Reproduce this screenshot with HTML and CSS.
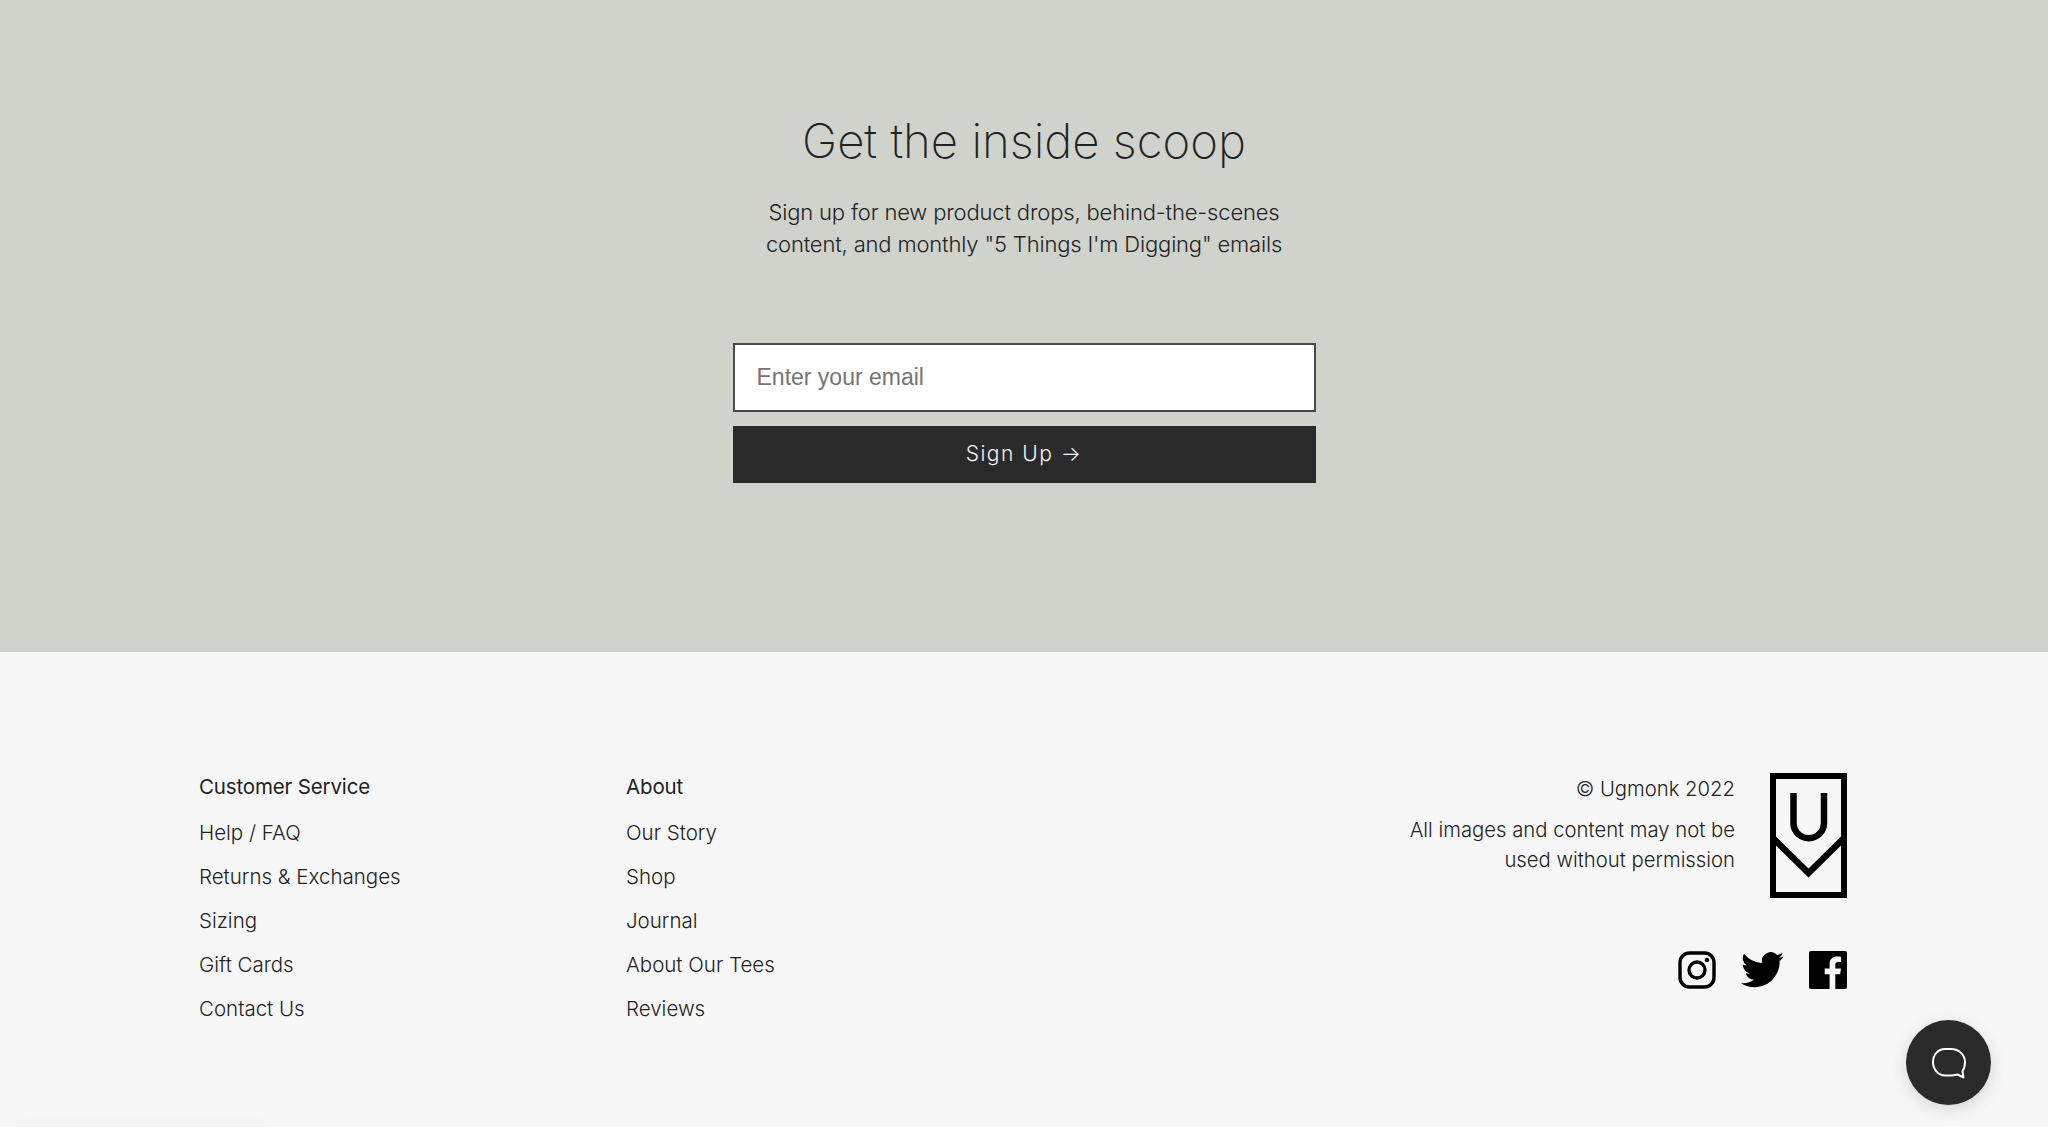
FILE: index.html
```html
<!DOCTYPE html>
<html lang="en">
<head>
<meta charset="utf-8">
<title>Ugmonk</title>
<link rel="stylesheet" href="styles.css">
</head>
<body>
<section class="signup">
  <h2 class="signup-title">Get the inside scoop</h2>
  <p class="signup-text">Sign up for new product drops, behind-the-scenes<br>content, and monthly "5 Things I'm Digging" emails</p>
  <form class="signup-form">
    <input class="signup-input" type="email" placeholder="Enter your email">
    <button class="signup-button" type="button">Sign Up →</button>
  </form>
</section>
<footer class="footer">
  <nav class="footer-col footer-col-service">
    <h3 class="footer-heading">Customer Service</h3>
    <a class="footer-link" href="#">Help / FAQ</a>
    <a class="footer-link" href="#">Returns &amp; Exchanges</a>
    <a class="footer-link" href="#">Sizing</a>
    <a class="footer-link" href="#">Gift Cards</a>
    <a class="footer-link" href="#">Contact Us</a>
  </nav>
  <nav class="footer-col footer-col-about">
    <h3 class="footer-heading">About</h3>
    <a class="footer-link" href="#">Our Story</a>
    <a class="footer-link" href="#">Shop</a>
    <a class="footer-link" href="#">Journal</a>
    <a class="footer-link" href="#">About Our Tees</a>
    <a class="footer-link" href="#">Reviews</a>
  </nav>
  <div class="footer-right">
    <div class="brand">
      <div class="legal">
        <p class="legal-copy">© Ugmonk 2022</p>
        <p class="legal-note">All images and content may not be<br>used without permission</p>
      </div>
      <svg class="logo" viewBox="0 0 77 125" aria-label="Ugmonk logo">
        <rect x="3" y="3" width="71" height="119" fill="none" stroke="#000" stroke-width="6"/>
        <path d="M23.500 20V50a15.250 15.250 0 0 0 30.500 0V20" fill="none" stroke="#000" stroke-width="6.500"/>
        <path d="M4 66L38.500 100L73 66" fill="none" stroke="#000" stroke-width="6.500"/>
      </svg>
    </div>
    <div class="social">
      <svg class="icon-instagram" viewBox="0 0 38 38" aria-label="Instagram">
        <rect x="2" y="2" width="34" height="34" rx="9.500" fill="none" stroke="#000" stroke-width="3.400"/>
        <circle cx="19" cy="19" r="8" fill="none" stroke="#000" stroke-width="3.400"/>
        <circle cx="29" cy="9" r="2.300" fill="#000"/>
      </svg>
      <svg class="icon-twitter" viewBox="0 0 24 20" aria-label="Twitter">
        <path d="M24 2.370a9.800 9.800 0 0 1-2.830.78A4.940 4.940 0 0 0 23.340.42a9.900 9.900 0 0 1-3.130 1.190A4.930 4.930 0 0 0 11.810 6.100 14 14 0 0 1 1.670.96a4.930 4.930 0 0 0 1.520 6.570A4.900 4.900 0 0 1 .96 6.920v.06a4.930 4.930 0 0 0 3.950 4.830 4.950 4.950 0 0 1-2.220.08 4.930 4.930 0 0 0 4.600 3.420A9.880 9.880 0 0 1 0 17.350 13.940 13.940 0 0 0 7.550 19.560c9.060 0 14.010-7.500 14.010-14.010 0-.21 0-.43-.02-.64A10 10 0 0 0 24 2.370z" fill="#000"/>
      </svg>
      <svg class="icon-facebook" viewBox="0 0 38 38" aria-label="Facebook">
        <path d="M2 0H36a2 2 0 0 1 2 2V36a2 2 0 0 1-2 2H26.300V23.300H31.200L31.900 17.500H26.300V13.800C26.300 12.100 26.800 11 29.200 11H32.100V5.800C31.600 5.700 29.900 5.600 27.900 5.600 23.600 5.600 20.600 8.200 20.600 13.100V17.500H15.700V23.300H20.600V38H2A2 2 0 0 1 0 36V2A2 2 0 0 1 2 0Z" fill="#000"/>
      </svg>
    </div>
  </div>
</footer>
<button class="chat" type="button" aria-label="Open chat">
  <svg class="chat-icon" viewBox="0 0 36 32">
    <path d="M14 2H20C28 2 34 8 34 15C34 19 33 22 31.500 24L32.500 30.500L26.500 27.500C24.500 28 22 28.500 20 28.500H14C7 28.500 2 22 2 15C2 8 7 2 14 2Z" fill="none" stroke="#fff" stroke-width="2" stroke-linejoin="round"/>
  </svg>
</button>
<div class="ghost-widget"></div>
</body>
</html>
```
FILE: styles.css
```css
* { box-sizing: border-box; }
html, body { margin: 0; padding: 0; height: 1127px; overflow: hidden; }
body {
  position: relative;
  font-family: Inter, "Liberation Sans", sans-serif;
  background: #f7f7f7;
  color: #222;
}
.signup {
  height: 652px;
  background: #d0d3cc;
  padding-top: 111px;
  display: flex;
  flex-direction: column;
  align-items: center;
  text-align: center;
}
.signup-title {
  margin: 0;
  font-size: 47.300px;
  line-height: 60px;
  font-weight: 250;
  color: #222;
}
.signup-text {
  margin: 25px 0 0;
  font-size: 22px;
  line-height: 32px;
  font-weight: 300;
  letter-spacing: -0.170px;
}
.signup-form {
  margin-top: 83px;
  width: 583px;
  display: flex;
  flex-direction: column;
  gap: 14px;
}
.signup-input {
  height: 69px;
  border: 2px solid #4a4a4a;
  background: #fff;
  padding: 0 22px;
  font-family: "Liberation Sans", Arial, sans-serif;
  font-size: 23px;
  outline: none;
  border-radius: 0;
}
.signup-input::placeholder { color: #757575; opacity: 1; }
.signup-button {
  height: 57px;
  border: 0;
  padding: 0 0 2px;
  background: #2a2a2a;
  color: #f2f2f2;
  font-family: inherit;
  font-size: 21px;
  font-weight: 300;
  letter-spacing: 1.500px;
}
.footer {
  display: flex;
  padding: 120px 201px 0 199px;
  align-items: flex-start;
}
.footer-col { display: flex; flex-direction: column; }
.footer-col-service { width: 427px; }
.footer-col-about { width: 300px; }
.footer-heading {
  margin: 0 0 9px;
  height: 30px;
  font-size: 20.500px;
  line-height: 30px;
  font-weight: 400;
  letter-spacing: -0.150px;
}
.footer-link {
  height: 44px;
  font-size: 20.500px;
  line-height: 44px;
  font-weight: 300;
  color: #222;
  text-decoration: none;
}
.footer-right {
  margin-left: auto;
  margin-top: 1px;
  display: flex;
  flex-direction: column;
  align-items: flex-end;
}
.brand { display: flex; gap: 35px; align-items: flex-start; }
.legal { text-align: right; font-size: 20.300px; font-weight: 300; }
.legal-copy { margin: 1px 0 0; line-height: 30px; }
.legal-note { margin: 11px 0 0; line-height: 30px; }
.logo { width: 77px; height: 125px; display: block; }
.social {
  margin-top: 53px;
  display: flex;
  align-items: center;
  gap: 25px;
}
.icon-instagram { width: 38px; height: 38px; display: block; }
.icon-twitter { width: 43px; height: 36px; display: block; }
.icon-facebook { width: 38px; height: 38px; display: block; }
.chat {
  position: absolute;
  left: 1906px;
  top: 1020px;
  width: 85px;
  height: 85px;
  border: 0;
  border-radius: 50%;
  background: #2a2a2a;
  box-shadow: 0 4px 16px rgba(0, 0, 0, 0.14);
  display: flex;
  align-items: center;
  justify-content: center;
  padding: 0;
}
.chat-icon { width: 36px; height: 32px; display: block; }
.ghost-widget {
  position: absolute;
  left: 20px;
  top: 1135px;
  width: 245px;
  height: 40px;
  box-shadow: 0 0 24px rgba(0, 0, 0, 0.08);
}
```
